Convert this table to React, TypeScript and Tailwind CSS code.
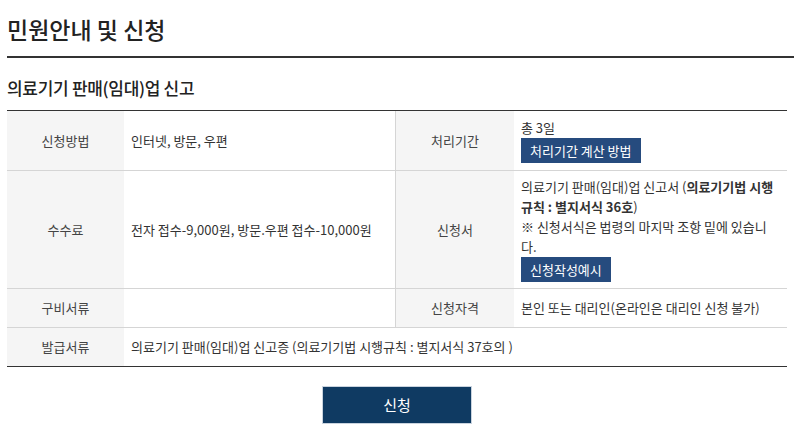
import React from "react";

const font = { fontFamily: '"Noto Sans CJK KR", "Noto Sans", sans-serif' };

const Label = ({ children }: { children: React.ReactNode }) => (
  <div className="flex items-center justify-center bg-[#f5f5f5] text-[13px] text-[#444]">
    {children}
  </div>
);

const SmallButton = ({ children }: { children: React.ReactNode }) => (
  <button className="h-[25px] px-[9px] bg-[#264b7e] text-white text-[13px] leading-[25px]">
    {children}
  </button>
);

const App = () => {
  return (
    <div className="w-[794px] h-[429px] bg-white text-[#333]" style={font}>
      {/* 상단 제목 */}
      <div className="ml-[7px] pt-[14px] h-[58px] border-b-2 border-[#333]">
        <h1 className="text-[23px] leading-[30px] font-medium text-[#222]">
          민원안내 및 신청
        </h1>
      </div>

      <div className="mx-[7px]">
        <h2 className="mt-[19px] text-[17px] leading-[22px] font-medium tracking-[-0.3px] text-[#222]">
          의료기기 판매(임대)업 신고
        </h2>

        {/* 안내 표 */}
        <div className="mt-[11px] grid grid-cols-[117px_272px_118px_273px] grid-rows-[59px_118px_39px_39px] border-t border-b border-[#333] text-[13px] leading-[20px]">
          {/* row 1 */}
          <Label>신청방법</Label>
          <div className="flex items-center px-[7px] border-r border-[#d5d5d5]">인터넷, 방문, 우편</div>
          <Label>처리기간</Label>
          <div className="flex flex-col justify-center items-start px-[7px]">
            <span>총 3일</span>
            <SmallButton>처리기간 계산 방법</SmallButton>
          </div>

          {/* row 2 */}
          <div className="col-span-4 grid grid-cols-subgrid border-t border-[#d5d5d5]">
            <Label>수수료</Label>
            <div className="flex items-center px-[7px] border-r border-[#d5d5d5]">
              전자 접수-9,000원, 방문.우편 접수-10,000원
            </div>
            <Label>신청서</Label>
            <div className="flex flex-col justify-center items-start px-[7px]">
              <p>
                의료기기 판매(임대)업 신고서 (<b className="font-bold">의료기기법 시행 규칙 : 별지서식 36호</b>)
              </p>
              <p>※ 신청서식은 법령의 마지막 조항 밑에 있습니다.</p>
              <SmallButton>신청작성예시</SmallButton>
            </div>
          </div>

          {/* row 3 */}
          <div className="col-span-4 grid grid-cols-subgrid border-t border-[#d5d5d5]">
            <Label>구비서류</Label>
            <div className="flex items-center px-[7px] border-r border-[#d5d5d5]"></div>
            <Label>신청자격</Label>
            <div className="flex items-center px-[7px]">본인 또는 대리인(온라인은 대리인 신청 불가)</div>
          </div>

          {/* row 4 */}
          <div className="col-span-4 grid grid-cols-subgrid border-t border-[#d5d5d5]">
            <Label>발급서류</Label>
            <div className="col-span-3 flex items-center px-[7px]">
              의료기기 판매(임대)업 신고증 (의료기기법 시행규칙 : 별지서식 37호의 )
            </div>
          </div>
        </div>

        <div className="flex justify-center mt-[19px]">
          <button className="w-[150px] h-[38px] bg-[#0f3a62] border border-[#c9d3de] text-white text-[15px]">
            신청
          </button>
        </div>
      </div>
    </div>
  );
};

export default App;
